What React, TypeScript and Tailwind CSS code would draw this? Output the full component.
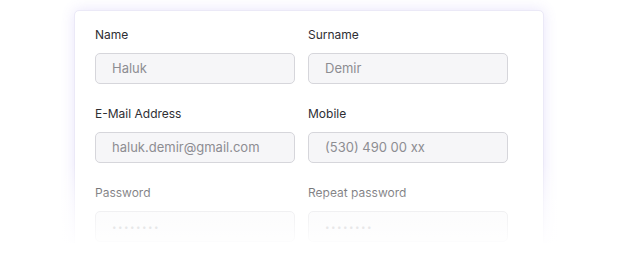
import React from "react";

const fields = [
  { label: "Name", value: "Haluk" },
  { label: "Surname", value: "Demir" },
  { label: "E-Mail Address", value: "haluk.demir@gmail.com" },
  { label: "Mobile", value: "(530) 490 00 xx" },
  { label: "Password", value: "••••••••", secret: true },
  { label: "Repeat password", value: "••••••••", secret: true },
];

export default function App() {
  return (
    <div className="h-[272px] w-[618px] bg-white" style={{ fontFamily: "Inter, 'Noto Sans', sans-serif" }}>
      <div className="relative h-[243px] overflow-hidden pt-[10px]">
        <div className="ml-[74px] w-[470px] rounded-[5px] border border-[#ebe9f7] bg-white pl-[20px] pt-[17px] shadow-[0_0_14px_rgba(110,90,230,0.16)]">
          <div className="grid grid-cols-[200px_200px] gap-x-[13px] gap-y-[23px]">
            {fields.map((f) => (
              <div key={f.label} className="flex flex-col gap-[11px]">
                <label className="h-[14px] text-[12px] leading-[14px] text-[#2e2e33]">{f.label}</label>
                <div className="flex h-[31px] items-center rounded-[5px] border border-[#d6d6db] bg-[#f6f6f8] pl-[16px]">
                  <span className={f.secret ? "text-[8px] tracking-[1.5px] text-[#8a8a90]" : "text-[13px] text-[#8d8d92]"}>
                    {f.value}
                  </span>
                </div>
              </div>
            ))}
          </div>
          <div className="h-[40px]" />
        </div>
        {/* fade-out over the lower rows */}
        <div className="pointer-events-none absolute inset-x-0 bottom-0 h-[80px] bg-gradient-to-b from-white/0 via-white/55 to-white/95" />
      </div>
    </div>
  );
}
